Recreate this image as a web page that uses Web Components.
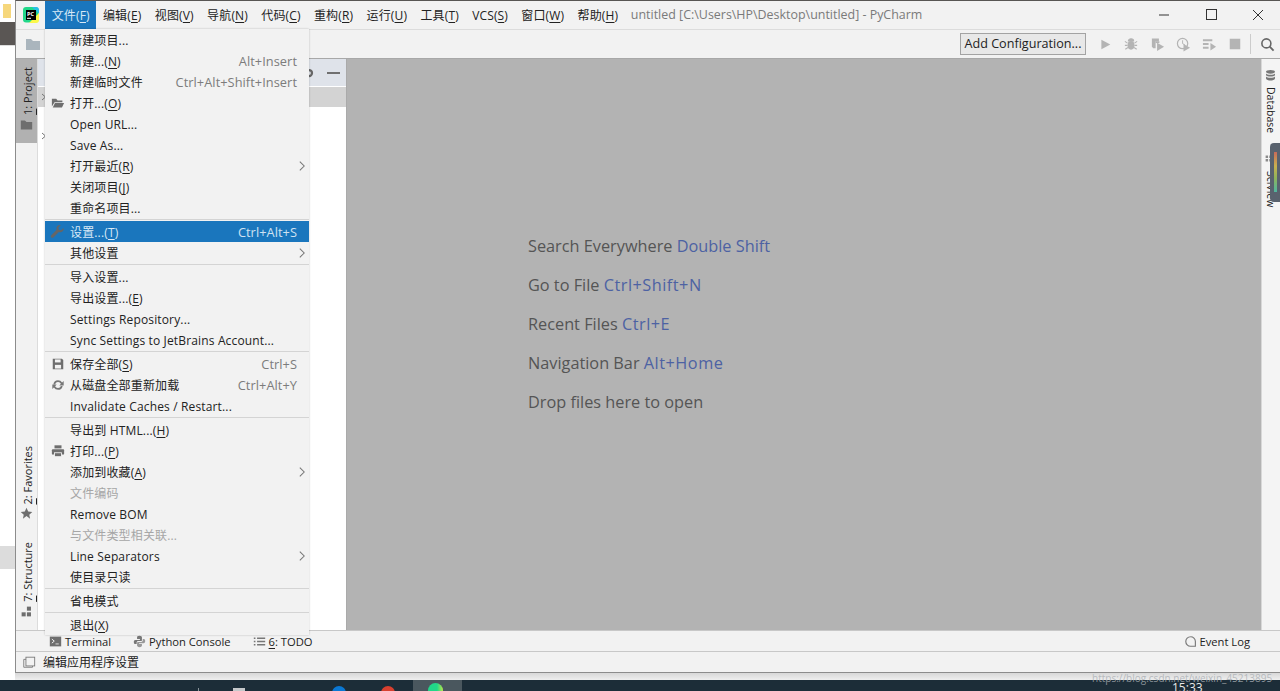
<!DOCTYPE html>
<html lang="zh">
<head>
<meta charset="utf-8">
<title>PyCharm</title>
<style>
  html, body { margin: 0; height: 691px; overflow: hidden; background: #fff; }
  body { font-family: "Open Sans", "Noto Sans CJK SC", sans-serif; font-size: 12px; color: #222; }
</style>
</head>
<body>
<ide-desktop></ide-desktop>

<script>
// Shared icon markup, all drawn on a 16x16 box
const ICONS = {
  folder: '<path d="M1 3h5l2 2h7v9H1z" fill="#aab5bd"/>',
  folderDark: '<path d="M1 3h5l2 2h7v9H1z" fill="#6e6e6e"/>',
  open: '<path d="M1 3h5l1.500 2H13v2H4L1 12z" fill="#6e6e6e"/><path d="M4.500 8H15l-2.500 5H2z" fill="#6e6e6e"/>',
  wrench: '<path d="M14.500 4.200l-2.700 2.500-2.300-.6-.6-2.300L11.500 1.200C9.300.6 7.200 2 6.900 4.200c-.1.700 0 1.300.2 1.900L1.300 12c-.6.600-.6 1.700 0 2.300.6.600 1.700.6 2.300 0l5.800-5.800c.6.200 1.300.3 2 .2 2.200-.3 3.700-2.400 3.100-4.500z" fill="#666"/>',
  save: '<path d="M2 2h10.500L14 3.500V14H2z" fill="#6e6e6e"/><rect x="4.500" y="2.800" width="6.500" height="3.400" fill="#f2f2f2"/><rect x="4.500" y="9" width="7" height="4.200" fill="#f2f2f2"/>',
  sync: '<path d="M8 2.500a5.500 5.500 0 0 1 4.700 2.700L14.500 3.500V8.500H9.500l1.800-1.900A3.600 3.600 0 0 0 4.700 7H2.700A5.500 5.500 0 0 1 8 2.500zM8 13.500a5.500 5.500 0 0 1-4.700-2.700L1.500 12.500V7.500h5L4.700 9.400A3.600 3.600 0 0 0 11.300 9h2A5.500 5.500 0 0 1 8 13.500z" fill="#777"/>',
  print: '<rect x="4" y="1.500" width="8" height="3.500" fill="#6e6e6e"/><rect x="1" y="6" width="14" height="6" rx="1" fill="#6e6e6e"/><rect x="4" y="10" width="8" height="4.500" fill="#6e6e6e" stroke="#f2f2f2"/>',
  star: '<path d="M8 1l2.100 4.600 5 .6-3.700 3.400 1 5L8 11.100 3.600 14.600l1-5L.9 6.200l5-.6z" fill="#6e6e6e"/>',
  structure: '<rect x="8.500" y="2" width="5" height="5" fill="#6e6e6e"/><rect x="2" y="9" width="5" height="5" fill="#6e6e6e"/><rect x="8.500" y="9" width="5" height="5" fill="#6e6e6e"/>',
  terminal: '<rect x="1" y="2" width="14" height="12" fill="#6e6e6e"/><path d="M3.500 5l3 2.500-3 2.500" fill="none" stroke="#f2f2f2" stroke-width="1.200"/><path d="M8 11h4" stroke="#f2f2f2"/>',
  python: '<path d="M8 1C5.500 1 5 2 5 3v2h3.500v1H3C1.500 6 1 7 1 8.500S1.500 11 3 11h1.500V9.500C4.500 8.300 5.300 7.500 6.500 7.500h3C10.500 7.500 11 7 11 6V3c0-1-1-2-3-2z" fill="#777"/><path d="M8 15c2.500 0 3-1 3-2v-2H7.500v-1H13c1.500 0 2-1 2-2.500S14.500 5 13 5h-1v1.500c0 1.200-.8 2-2 2H6.500C5.500 8.500 5 9 5 10v3c0 1 1 2 3 2z" fill="#999"/>',
  todo: '<path d="M1 3h2v2H1zM5 3h10v2H5zM1 7h2v2H1zM5 7h10v2H5zM1 11h2v2H1zM5 11h10v2H5z" fill="#777"/>',
  db: '<ellipse cx="8" cy="3.500" rx="5.500" ry="2.200" fill="#777"/><path d="M2.500 5.500c1 2 10 2 11 0v2.300c-1 2-10 2-11 0zM2.500 9.300c1 2 10 2 11 0v2.700c-1 3-10 3-11 0z" fill="#777"/>',
  grid: '<path d="M2 3h3v3H2zM6.500 3h3v3h-3zM11 3h3v3h-3zM2 7.500h3v3H2zM6.500 7.500h3v3h-3zM11 7.500h3v3h-3z" fill="#8a8a8a"/>',
  play: '<path d="M2 1l13 7-13 7z" fill="#b4b4b4"/>',
  bug: '<ellipse cx="8" cy="9.500" rx="4" ry="5" fill="#b4b4b4"/><path d="M5 4.500a3 2.500 0 0 1 6 0zM1 5l3 2M15 5l-3 2M1 9.500h3M15 9.500h-3M1.500 14l3-2M14.500 14l-3-2" stroke="#b4b4b4" stroke-width="1.300" fill="#b4b4b4"/>',
  cover: '<path d="M2 1.500h7.500v3H6V12H3.500L2 10.500z" fill="#b4b4b4"/><path d="M7.500 6l7.500 4.500L7.500 15z" fill="#b4b4b4"/><rect x="6" y="4.500" width="4" height="2" fill="#b4b4b4"/>',
  profile: '<circle cx="7" cy="7" r="5.500" fill="none" stroke="#b4b4b4" stroke-width="1.300"/><path d="M7 3.500V7l2.500 1.500" fill="none" stroke="#b4b4b4"/><path d="M8 7.500l7 4-7 4z" fill="#b4b4b4"/>',
  concurrency: '<path d="M1 2.500h10v2H1zM1 6.500h6v2H1zM1 10.500h6v2H1z" fill="#b4b4b4"/><path d="M9 6.500l6 4-6 4z" fill="#b4b4b4"/>',
  stop: '<rect x="1" y="1" width="14" height="14" fill="#b4b4b4"/>',
  search: '<circle cx="6.800" cy="6.800" r="4.800" fill="none" stroke="#666" stroke-width="1.700"/><path d="M10.300 10.300l4.200 4.200" stroke="#666" stroke-width="2"/>',
  log: '<path d="M8 2.200a5.800 5.800 0 1 0 0 11.600h6V8A5.800 5.800 0 0 0 8 2.200z" fill="none" stroke="#777" stroke-width="1.400"/>',
  status: '<rect x="4.500" y="2.500" width="10" height="10" fill="none" stroke="#777"/><path d="M4.500 5H2v9h10v-1.500" fill="none" stroke="#777"/>',
  chevron: '<path d="M5.500 3l5 5-5 5" fill="none" stroke="#777" stroke-width="1.200"/>',
};

function svg(name, size) {
  return `<svg width="${size}" height="${size}" viewBox="0 0 16 16" aria-hidden="true">${ICONS[name]}</svg>`;
}

// <ide-icon name="folder" size="16">
class IdeIcon extends HTMLElement {
  connectedCallback() {
    const size = this.getAttribute("size") || 16;
    this.attachShadow({ mode: "open" }).innerHTML = `
      <style>:host { display: inline-flex; flex: none; align-items: center; justify-content: center; }
      svg { display: block; }</style>${svg(this.getAttribute("name"), size)}`;
  }
}
customElements.define("ide-icon", IdeIcon);

// One entry of the top menu bar, the slot holds the label
class MenuTitle extends HTMLElement {
  constructor() {
    super();
    this.attachShadow({ mode: "open" }).innerHTML = `
      <style>
        :host { display: flex; align-items: center; height: 28px; padding: 0 6.650px; font-size: 12px; letter-spacing: .15px; color: #222; white-space: nowrap; }
        :host([active]) { background: #1a76bd; color: #d8e9f6; }
      </style><slot></slot>`;
  }
}
customElements.define("menu-title", MenuTitle);

// Row in the file menu: icon, label slot, shortcut, submenu arrow
class MenuRow extends HTMLElement {
  constructor() {
    super();
    const icon = this.getAttribute("icon");
    const key = this.getAttribute("key");
    this.attachShadow({ mode: "open" }).innerHTML = `
      <style>
        :host { display: flex; align-items: center; height: 21px; color: #222; white-space: nowrap; font-size: 12px; letter-spacing: .15px; }
        :host([disabled]) { color: #a6a6a6; }
        :host([selected]) { background: #1a76bd; color: #d8e9f6; }
        .ic { width: 25px; flex: none; display: flex; justify-content: flex-end; padding-right: 5px; box-sizing: border-box; }
        /* fixed line height so latin and CJK rows share one baseline */
        .label { flex: 1; line-height: 19px; margin-top: 2px; }
        .key { color: #7c7c7c; padding-right: 12px; font-size: 12.800px; letter-spacing: .05px; }
        :host([selected]) .key { color: #cfe2f2; }
        .arrow { display: flex; width: 14px; margin-left: 2px; }
      </style>
      <span class="ic">${icon ? svg(icon, icon === "wrench" ? 15 : 14) : ""}</span>
      <span class="label"><slot></slot></span>
      ${key ? `<span class="key">${key}</span>` : ""}
      ${this.hasAttribute("sub") ? `<span class="arrow">${svg("chevron", 14)}</span>` : ""}`;
  }
}
customElements.define("menu-row", MenuRow);

class MenuSep extends HTMLElement {
  constructor() {
    super();
    this.attachShadow({ mode: "open" }).innerHTML = `
      <style>:host { display: flex; align-items: center; height: 3px; } i { display: block; flex: 1; height: 1px; background: #d4d4d4; }</style><i></i>`;
  }
}
customElements.define("menu-sep", MenuSep);

// Dropdown panel, lies over the window
class FileMenu extends HTMLElement {
  constructor() {
    super();
    this.attachShadow({ mode: "open" }).innerHTML = `
      <style>
        :host { position: absolute; left: 45px; top: 29px; width: 264px; display: block; background: #f2f2f2;
          box-shadow: 0 0 2px rgba(0,0,0,.22); z-index: 5; }
      </style><slot></slot>`;
  }
}
customElements.define("file-menu", FileMenu);

// Vertical tab in the side strips
class SideTab extends HTMLElement {
  constructor() {
    super();
    const icon = this.getAttribute("icon");
    const side = this.getAttribute("side");
    this.attachShadow({ mode: "open" }).innerHTML = `
      <style>
        :host { display: flex; width: 21px; flex: none; flex-direction: column; align-items: center; box-sizing: border-box; padding: 8px 0 8px; gap: 3px; font-size: 11px; color: #222; }
        :host([active]) { background: #b1b1b1; }
        :host([side="right"]) { width: 17px; padding-top: 10px; gap: 5px; font-size: 10.500px; }
        .t { writing-mode: vertical-rl; white-space: nowrap; line-height: 17px; }
        :host([side="left"]) .t { transform: rotate(180deg); margin-left: 2px; }
        svg { flex: none; }
      </style>
      ${side === "right" ? svg(icon, 13) : ""}
      <span class="t"><slot></slot></span>
      ${side === "left" ? svg(icon, 13) : ""}`;
  }
}
customElements.define("side-tab", SideTab);

// Line of the empty editor hint: grey text and a blue shortcut
class EditorHint extends HTMLElement {
  constructor() {
    super();
    const key = this.getAttribute("key");
    const spacing = key && key.includes("+") ? ".5px" : "0";
    this.attachShadow({ mode: "open" }).innerHTML = `
      <style>
        :host { display: block; height: 39px; font-size: 16.300px; line-height: 24px; color: #555; white-space: nowrap; }
        b { font-weight: 400; color: #4d62a3; letter-spacing: ${spacing}; }
      </style><slot></slot>${key ? ` <b>${key}</b>` : ""}`;
  }
}
customElements.define("editor-hint", EditorHint);

// Bottom tool button
class ToolButton extends HTMLElement {
  constructor() {
    super();
    this.attachShadow({ mode: "open" }).innerHTML = `
      <style>
        :host { display: flex; align-items: center; gap: 3px; font-size: 11.200px; color: #222; white-space: nowrap; }
      </style>${svg(this.getAttribute("icon"), 13)}<span><slot></slot></span>`;
  }
}
customElements.define("tool-button", ToolButton);

const DESKTOP = document.createElement("template");
DESKTOP.innerHTML = `
<style>
  :host { display: block; position: relative; width: 1280px; height: 691px; overflow: hidden; background: #fff; }
  u { text-underline-offset: 2px; }
  .page { display: grid; grid-template-columns: 15px 1fr; grid-template-rows: 673px 7px 11px; height: 691px; }
  /* strip of the window behind, at the far left */
  .behind { grid-row: 1 / 3; display: flex; flex-direction: column; background: #fff; }
  .behind .a { height: 22px; background: linear-gradient(#f6d77c, #f6d77c) 3px 4px / 8px 14px no-repeat; }
  .behind .b { height: 23px; background: #5a5654; }
  .behind .c { height: 1px; background: #ddd; }
  .behind .d { height: 23px; margin-top: 500px; background: #dcdcdc; }
  .win { display: flex; flex-direction: column; background: #f2f2f2; border-top: 1px solid #585654; border-left: 1px solid #8c8c8c; border-bottom: 1px solid #8c8c8c; box-sizing: border-box; min-width: 0; }
  .titlebar { height: 29px; flex: none; display: flex; align-items: flex-start; border-bottom: 1px solid #dcdcdc; box-sizing: border-box; }
  .logo { width: 29px; height: 28px; flex: none; display: flex; justify-content: center; align-items: center; }
  .wintitle { margin: 0 0 0 6px; color: #7a7a7a; font-size: 12.450px; line-height: 28px; white-space: nowrap; flex: 1; }
  .caption { display: flex; align-items: center; height: 28px; }
  .caption span { display: flex; justify-content: center; }
  .caption span:nth-child(1) { width: 49px; }
  .caption span:nth-child(2) { width: 48px; }
  .caption span:nth-child(3) { width: 44px; }
  .toolbar { height: 29px; flex: none; display: flex; align-items: center; border-bottom: 1px solid #a8a8a8; box-sizing: border-box; }
  .toolbar .home { margin-left: 9px; }
  .spacer { flex: 1; }
  .cfg { height: 22px; width: 126px; box-sizing: border-box; border: 1px solid #a3a3a3; background: #e8e8e8; display: flex; align-items: center; justify-content: center; padding-bottom: 2px; font-size: 12.600px; color: #222; white-space: nowrap; }
  .runs { display: flex; align-items: center; margin-left: 6px; }
  .runs ide-icon { width: 26px; }
  .vsep { width: 1px; height: 20px; background: #ccc; margin: 0 9px 0 2px; }
  .main { flex: 1; display: flex; min-height: 0; }
  .strip { width: 22px; flex: none; display: flex; flex-direction: column; background: #f2f2f2; border-right: 1px solid #dcdcdc; box-sizing: border-box; }
  .strip .fill { flex: 1; }
  .panel { width: 309px; flex: none; background: #fff; display: flex; flex-direction: column; border-right: 1px solid #aaa; box-sizing: border-box; }
  .panel .head { height: 27px; background: #dfe3ea; display: flex; align-items: center; justify-content: flex-end; padding-right: 6px; gap: 12px; }
  .panel .head i { width: 13px; height: 2px; background: #707070; display: block; }
  .panel .row { height: 20px; background: #d3d3d3; margin-top: 1px; }
  .editor { flex: 1; background: #b3b3b3; padding: 175px 0 0 181px; }
  .right { width: 19px; flex: none; background: #f4f4f4; border-left: 1px solid #d8d8d8; box-sizing: border-box; display: flex; flex-direction: column; position: relative; }
  .meter { position: absolute; right: 0; top: 84px; width: 10px; height: 59px; background: #59626e; border-radius: 4px 0 0 4px; display: flex; justify-content: center; padding-top: 9px; box-sizing: border-box; }
  .meter i { display: block; width: 3px; height: 40px; background: linear-gradient(#c76a5a, #c9b04f 35%, #8fb45a 65%, #4fb6a0); }
  .tools { height: 22px; flex: none; display: flex; align-items: center; padding: 1px 30px 0 33px; gap: 22px; border-top: 1px solid #c8c8c8; border-bottom: 1px solid #c8c8c8; box-sizing: border-box; }
  .status { height: 20px; flex: none; display: flex; align-items: center; gap: 7px; padding-left: 6px; font-size: 12px; color: #222; }
  .under { grid-column: 2; background: linear-gradient(#d8d8d8, #eeeeee); }
  .task { grid-column: 1 / 3; background: #1c2d38; position: relative; overflow: hidden; }
  .task-ic { position: absolute; top: 6px; width: 14px; height: 14px; border-radius: 50%; }
  .clock { position: absolute; left: 1172px; top: 1px; color: #e8e8e8; font-size: 12px; line-height: 14px; }
  .mark { position: absolute; left: 1092px; top: 670px; color: rgba(170,175,180,.8); font-size: 10px; line-height: 16px; z-index: 6; white-space: nowrap; }
  .chev { position: absolute; left: 40px; }
</style>
<div class="page">
  <div class="behind"><div class="a"></div><div class="b"></div><div class="c"></div><div class="d"></div></div>
  <div class="win">
    <div class="titlebar">
      <span class="logo">
        <svg width="16" height="16" viewBox="0 0 16 16" aria-hidden="true">
          <rect x="0" y="0" width="15.500" height="15.500" rx="3" fill="#21d789"/>
          <path d="M9 0h4a3 3 0 0 1 3 3v4z" fill="#25bfe6"/>
          <path d="M16 6v7a3 3 0 0 1-3 3H6z" fill="#fcf84a"/>
          <rect x="3" y="3" width="10" height="10" fill="#000"/>
          <text x="4" y="8.500" font-size="5.500" font-weight="700" fill="#fff" font-family="Open Sans">PC</text>
          <rect x="4" y="10.800" width="4" height="1" fill="#fff"/>
        </svg>
      </span>
      <menu-title active>文件(<u>F</u>)</menu-title>
      <menu-title>编辑(<u>E</u>)</menu-title>
      <menu-title>视图(<u>V</u>)</menu-title>
      <menu-title>导航(<u>N</u>)</menu-title>
      <menu-title>代码(<u>C</u>)</menu-title>
      <menu-title>重构(<u>R</u>)</menu-title>
      <menu-title>运行(<u>U</u>)</menu-title>
      <menu-title>工具(<u>T</u>)</menu-title>
      <menu-title>VCS(<u>S</u>)</menu-title>
      <menu-title>窗口(<u>W</u>)</menu-title>
      <menu-title>帮助(<u>H</u>)</menu-title>
      <span class="wintitle">untitled [C:\\Users\\HP\\Desktop\\untitled] - PyCharm</span>
      <div class="caption">
        <span><svg width="12" height="12" viewBox="0 0 12 12"><path d="M1 6h10" stroke="#333"/></svg></span>
        <span><svg width="12" height="12" viewBox="0 0 12 12"><rect x=".5" y=".5" width="10" height="10" fill="none" stroke="#333"/></svg></span>
        <span><svg width="12" height="12" viewBox="0 0 12 12"><path d="M1 1l10 10M11 1L1 11" stroke="#333"/></svg></span>
      </div>
    </div>
    <div class="toolbar">
      <ide-icon class="home" name="folder" size="16"></ide-icon>
      <div class="spacer"></div>
      <div class="cfg">Add Configuration...</div>
      <div class="runs">
        <ide-icon name="play" size="11"></ide-icon>
        <ide-icon name="bug" size="14"></ide-icon>
        <ide-icon name="cover" size="15"></ide-icon>
        <ide-icon name="profile" size="15"></ide-icon>
        <ide-icon name="concurrency" size="15"></ide-icon>
        <ide-icon name="stop" size="12"></ide-icon>
      </div>
      <div class="vsep"></div>
      <ide-icon name="search" size="15" style="margin-right:5px"></ide-icon>
    </div>
    <div class="main">
      <div class="strip">
        <side-tab side="left" icon="folderDark" active style="height:84px"><span><u>1</u>: Project</span></side-tab>
        <div class="fill"></div>
        <side-tab side="left" icon="star" style="margin-bottom:6px"><span><u>2</u>: Favorites</span></side-tab>
        <side-tab side="left" icon="structure" style="padding-bottom:12px"><span><u>7</u>: Structure</span></side-tab>
      </div>
      <div class="panel">
        <div class="head"><svg width="12" height="12" viewBox="0 0 16 16" aria-hidden="true"><circle cx="8" cy="8" r="4" fill="none" stroke="#666" stroke-width="3"/></svg><i></i></div>
        <div class="row"></div>
      </div>
      <div class="editor">
        <editor-hint key="Double Shift">Search Everywhere</editor-hint>
        <editor-hint key="Ctrl+Shift+N">Go to File</editor-hint>
        <editor-hint key="Ctrl+E">Recent Files</editor-hint>
        <editor-hint key="Alt+Home">Navigation Bar</editor-hint>
        <editor-hint>Drop files here to open</editor-hint>
      </div>
      <div class="right">
        <side-tab side="right" icon="db"><span>Database</span></side-tab>
        <side-tab side="right" icon="grid" style="padding-top:12px"><span>SciView</span></side-tab>
        <div class="meter"><i></i></div>
      </div>
    </div>
    <div class="tools">
      <tool-button icon="terminal">Terminal</tool-button>
      <tool-button icon="python">Python Console</tool-button>
      <tool-button icon="todo"><u>6</u>: TODO</tool-button>
      <div class="spacer"></div>
      <tool-button icon="log">Event Log</tool-button>
    </div>
    <div class="status"><ide-icon name="status" size="14"></ide-icon><span>编辑应用程序设置</span></div>
  </div>
  <div class="under"></div>
  <div class="task">
    <span style="position:absolute;left:198px;top:8px;width:1px;height:3px;background:#8a949a"></span>
    <span style="position:absolute;left:233px;top:8px;width:12px;height:3px;background:#c4c8ca"></span>
    <span class="task-ic" style="left:332px;background:#0a78d4"></span>
    <span class="task-ic" style="left:381px;background:#d8402f"></span>
    <span style="position:absolute;left:413px;top:0;width:49px;height:11px;background:#4a575e"></span>
    <span class="task-ic" style="left:428px;top:3px;width:15px;height:15px;background:linear-gradient(90deg,#21d789 60%,#b8e84a)"></span>
    <span class="clock">15:33</span>
  </div>
</div>
<file-menu>
  <menu-row>新建项目...</menu-row>
  <menu-row key="Alt+Insert">新建...(<u>N</u>)</menu-row>
  <menu-row key="Ctrl+Alt+Shift+Insert">新建临时文件</menu-row>
  <menu-row icon="open">打开...(<u>O</u>)</menu-row>
  <menu-row>Open URL...</menu-row>
  <menu-row>Save As...</menu-row>
  <menu-row sub>打开最近(<u>R</u>)</menu-row>
  <menu-row>关闭项目(<u>J</u>)</menu-row>
  <menu-row>重命名项目...</menu-row>
  <menu-sep></menu-sep>
  <menu-row selected icon="wrench" key="Ctrl+Alt+S">设置...(<u>T</u>)</menu-row>
  <menu-row sub>其他设置</menu-row>
  <menu-sep></menu-sep>
  <menu-row>导入设置...</menu-row>
  <menu-row>导出设置...(<u>E</u>)</menu-row>
  <menu-row>Settings Repository...</menu-row>
  <menu-row>Sync Settings to JetBrains Account...</menu-row>
  <menu-sep></menu-sep>
  <menu-row icon="save" key="Ctrl+S">保存全部(<u>S</u>)</menu-row>
  <menu-row icon="sync" key="Ctrl+Alt+Y">从磁盘全部重新加载</menu-row>
  <menu-row>Invalidate Caches / Restart...</menu-row>
  <menu-sep></menu-sep>
  <menu-row>导出到 HTML...(<u>H</u>)</menu-row>
  <menu-row icon="print">打印...(<u>P</u>)</menu-row>
  <menu-row sub>添加到收藏(<u>A</u>)</menu-row>
  <menu-row disabled>文件编码</menu-row>
  <menu-row>Remove BOM</menu-row>
  <menu-row disabled>与文件类型相关联...</menu-row>
  <menu-row sub>Line Separators</menu-row>
  <menu-row>使目录只读</menu-row>
  <menu-sep></menu-sep>
  <menu-row>省电模式</menu-row>
  <menu-sep></menu-sep>
  <menu-row>退出(<u>X</u>)</menu-row>
</file-menu>
<svg class="chev" style="top:93px" width="8" height="8" viewBox="0 0 16 16" aria-hidden="true"><path d="M4 2l7 6-7 6" fill="none" stroke="#777" stroke-width="2"/></svg>
<svg class="chev" style="top:132px" width="8" height="8" viewBox="0 0 16 16" aria-hidden="true"><path d="M4 2l7 6-7 6" fill="none" stroke="#777" stroke-width="2"/></svg>
<div class="mark">https://blog.csdn.net/weixin_45213895</div>`;

class IdeDesktop extends HTMLElement {
  constructor() {
    super();
    this.attachShadow({ mode: "open" }).appendChild(DESKTOP.content.cloneNode(true));
  }
}
customElements.define("ide-desktop", IdeDesktop);
</script>
</body>
</html>
